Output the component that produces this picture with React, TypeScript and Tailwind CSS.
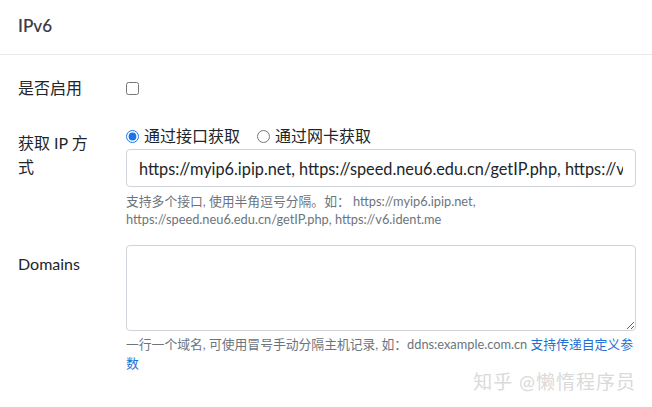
import { useState } from "react";

const font = {
  fontFamily: '"Segoe UI", Lato, "Noto Sans CJK SC", sans-serif',
};

export default function App() {
  const [enabled, setEnabled] = useState(false);
  const [mode, setMode] = useState("url");
  const [urls, setUrls] = useState(
    "https://myip6.ipip.net, https://speed.neu6.edu.cn/getIP.php, https://v6.ident.me"
  );
  const [domains, setDomains] = useState("");

  return (
    <div className="relative min-h-[407px] w-[652px] bg-white text-[#212529]" style={font}>
      {/* Card header */}
      <div className="h-[55px] border-b border-[#e9e9ec] px-[18px] flex items-center">
        <h5 className="text-[17px] font-semibold text-[#3d3d4a] leading-6 -mt-[2px]">IPv6</h5>
      </div>

      <div className="pt-[14px] pl-[18px] pr-[16px]">
        {/* Enable */}
        <div className="flex">
          <label className="w-[108px] shrink-0 pt-[7px] text-[16px] leading-6">是否启用</label>
          <div className="pt-[7px] h-[31px] flex items-center">
            <input
              type="checkbox"
              checked={enabled}
              onChange={(e) => setEnabled(e.target.checked)}
              className="m-0 w-[13px] h-[13px]"
            />
          </div>
        </div>

        {/* IP source */}
        <div className="flex mt-[24px]">
          <label className="w-[108px] shrink-0 pt-[7px] text-[16px] leading-6 pr-[30px]">获取 IP 方式</label>
          <div className="flex-1 min-w-0">
            <div className="flex items-center h-6 text-[16px]">
              <label className="flex items-center">
                <input
                  type="radio"
                  name="ipv6type"
                  checked={mode === "url"}
                  onChange={() => setMode("url")}
                  className="m-0 w-[13px] h-[13px] accent-[#1a73e8]"
                />
                <span className="ml-[5px]">通过接口获取</span>
              </label>
              <label className="flex items-center ml-[17px]">
                <input
                  type="radio"
                  name="ipv6type"
                  checked={mode === "netif"}
                  onChange={() => setMode("netif")}
                  className="m-0 w-[13px] h-[13px] accent-[#1a73e8]"
                />
                <span className="ml-[5px]">通过网卡获取</span>
              </label>
            </div>
            <input
              type="text"
              value={urls}
              onChange={(e) => setUrls(e.target.value)}
              className="mt-px block w-full h-[38px] border border-[#ced4da] rounded-[4px] px-3 text-[16.3px] text-[#212529] outline-none"
              style={font}
            />
            <p className="mt-[5px] text-[12.8px] leading-[18px] text-[#6c757d]">
              支持多个接口, 使用半角逗号分隔。如： https://myip6.ipip.net, https://speed.neu6.edu.cn/getIP.php, https://v6.ident.me
            </p>
          </div>
        </div>

        {/* Domains */}
        <div className="flex mt-[17px]">
          <label className="w-[108px] shrink-0 pt-[7px] text-[16px] leading-6">Domains</label>
          <div className="flex-1 min-w-0">
            <textarea
              value={domains}
              onChange={(e) => setDomains(e.target.value)}
              className="block w-full h-[86px] border border-[#ced4da] rounded-[4px] px-3 py-1.5 text-[16px] outline-none"
              style={font}
            />
            <p className="mt-[4px] text-[12.8px] leading-[19px] text-[#6c757d]">
              一行一个域名, 可使用冒号手动分隔主机记录, 如：ddns:example.com.cn{" "}
              <a href="#" className="text-[#1f6fd1]">支持传递自定义参数</a>
            </p>
          </div>
        </div>
      </div>

      {/* Watermark */}
      <div className="absolute right-[16px] top-[368px] text-[19px] text-[#dadada] tracking-[1px] pointer-events-none">
        知乎 @懒惰程序员
      </div>
    </div>
  );
}
